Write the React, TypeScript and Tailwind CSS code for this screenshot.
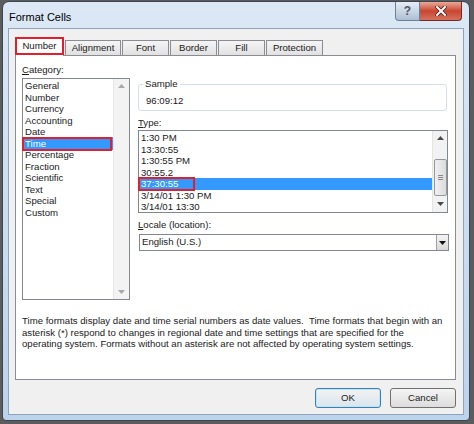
import React from 'react'

const categories = ['General', 'Number', 'Currency', 'Accounting', 'Date', 'Time', 'Percentage', 'Fraction', 'Scientific', 'Text', 'Special', 'Custom']
const types = ['1:30 PM', '13:30:55', '1:30:55 PM', '30:55.2', '37:30:55', '3/14/01 1:30 PM', '3/14/01 13:30']
const tabs = [
  { label: 'Alignment', w: 'w-[56px]' },
  { label: 'Font', w: 'w-[47px]' },
  { label: 'Border', w: 'w-[47px]' },
  { label: 'Fill', w: 'w-[47px]' },
  { label: 'Protection', w: 'w-[57px]' },
]

function Arrow({ dir, color = '#4a4a4a' }: { dir: 'up' | 'down'; color?: string }) {
  return (
    <svg width="7" height="4" viewBox="0 0 7 4">
      {dir === 'up' ? <path d="M0 4 L3.5 0 L7 4 Z" fill={color} /> : <path d="M0 0 L3.5 4 L7 0 Z" fill={color} />}
    </svg>
  )
}

export default function App() {
  return (
    <div className="w-[474px] h-[424px] bg-[#5b5c5e] overflow-hidden font-['Liberation_Sans',Arial,sans-serif] text-[9.6px] text-[#1a1a1a]">
      <div className="ml-[2px] mt-[1px] w-[468px] h-[420px] rounded-t-[7px] rounded-b-[4px] border border-[#3e4650] bg-gradient-to-b from-[#dce8f5] to-[#bcd3ec] flex flex-col px-[5px] pb-[5px]">
        {/* title bar */}
        <div className="h-[26px] flex items-start justify-between">
          <div className="pl-[1px] pt-[9px] text-[11px] leading-[13px] text-black">Format Cells</div>
          <div className="flex mr-[2px]">
            <div className="w-[25px] h-[19px] rounded-bl-[4px] border border-t-0 border-[#6f8094] bg-gradient-to-b from-[#e6eef6] to-[#aebfd3] flex items-center justify-center text-[12px] font-bold text-[#4d5663] leading-none">?</div>
            <div className="w-[42px] h-[19px] rounded-br-[4px] border border-t-0 border-l-0 border-[#6d2f2a] bg-gradient-to-b from-[#e9a898] via-[#c8452f] to-[#d4705d] flex items-center justify-center">
              <svg width="12" height="10" viewBox="0 0 12 10">
                <path d="M2 1 L10 9 M10 1 L2 9" stroke="#5b1f18" strokeWidth="3.6" strokeLinecap="square" />
                <path d="M2 1 L10 9 M10 1 L2 9" stroke="#ffffff" strokeWidth="2" strokeLinecap="square" />
              </svg>
            </div>
          </div>
        </div>

        {/* client area */}
        <div className="flex-1 bg-[#f0f0f0] border border-[#8fa5be] flex flex-col pl-[6px] pr-[7px] pt-[8px]">
          {/* tabs */}
          <div className="flex items-end h-[18px] relative z-10">
            <div className="relative w-[49px] h-[19px] -mb-px bg-white border border-b-0 border-[#898c95] flex items-center justify-center pb-[1px]">
              Number
              <div className="absolute left-[-1px] right-[-1px] top-[-1px] bottom-[1px] border-2 border-[#e2202b]" />
            </div>
            {tabs.map(t => (
              <div key={t.label} className={`${t.w} h-[15px] ml-[1px] bg-gradient-to-b from-[#f5f5f5] to-[#e1e1e1] border border-b-0 border-[#898c95] flex items-center justify-center`}>
                {t.label}
              </div>
            ))}
          </div>

          {/* panel */}
          <div className="h-[325px] bg-white border border-[#898c95] flex flex-col pl-[6px] pr-[6px]">
            <div className="flex gap-[8px]">
              {/* left column */}
              <div className="w-[108px] pt-[8px]">
                <div className="h-[12px] leading-[12px]"><span className="underline">C</span>ategory:</div>
                <div className="mt-[2px] h-[222px] border border-[#828790] flex">
                  <div className="flex-1 pt-[1px]">
                    {categories.map(c => (
                      <div key={c} className={`relative h-[11.5px] leading-[11.5px] pl-[2px] ${c === 'Time' ? 'bg-[#3399ff] text-white h-[13px] leading-[13px] -my-[0.75px]' : ''}`}>
                        {c}
                        {c === 'Time' && <div className="absolute left-[-1px] right-[1px] top-0 bottom-[-1px] border-2 border-[#e2202b]" />}
                      </div>
                    ))}
                  </div>
                  <div className="w-[16px] bg-[#f3f3f3] border-l border-[#e6e6e6] flex flex-col items-center justify-between py-[5px]">
                    <Arrow dir="up" color="#a8a8a8" />
                    <Arrow dir="down" color="#a8a8a8" />
                  </div>
                </div>
              </div>

              {/* right column */}
              <div className="w-[310px] pt-[22px]">
                <fieldset className="w-[309px] h-[33px] border border-[#d5dfe5] rounded-[3px] pl-[7px]">
                  <legend className="ml-[-3px] px-[2px] leading-[12px]">Sample</legend>
                  <div className="pt-[5px] leading-[12px]">96:09:12</div>
                </fieldset>
                <div className="mt-[6px] h-[12px] leading-[12px]"><span className="underline">T</span>ype:</div>
                <div className="mt-[1px] h-[83px] border border-[#828790] flex">
                  <div className="flex-1 pt-[1px] pl-[1px]">
                    {types.map(t => (
                      <div key={t} className={`relative h-[11.5px] leading-[11.5px] pl-[1px] ${t === '37:30:55' ? 'bg-[#3399ff] text-white' : ''}`}>
                        {t}
                        {t === '37:30:55' && <div className="absolute left-[-2px] w-[57px] top-[-1px] bottom-[-1px] border-2 border-[#e2202b]" />}
                      </div>
                    ))}
                  </div>
                  <div className="w-[15px] bg-[#f2f2f2] border-l border-[#e4e4e4] flex flex-col items-center">
                    <div className="h-[14px] flex items-center"><Arrow dir="up" /></div>
                    <div className="mt-[14px] w-[13px] h-[37px] rounded-[2px] border border-[#979797] bg-gradient-to-r from-[#f0f0f0] to-[#dcdcdc] flex flex-col items-center justify-center gap-[1px]">
                      <div className="w-[5px] h-px bg-[#888]" />
                      <div className="w-[5px] h-px bg-[#888]" />
                      <div className="w-[5px] h-px bg-[#888]" />
                    </div>
                    <div className="flex-1 flex items-center"><Arrow dir="down" /></div>
                  </div>
                </div>
                <div className="mt-[6px] h-[12px] leading-[12px]"><span className="underline">L</span>ocale (location):</div>
                <div className="mt-[3px] ml-[1px] w-[310px] h-[17px] border border-[#828790] flex items-center pl-[2px]">
                  <div className="flex-1">English (U.S.)</div>
                  <div className="w-[12px] h-[15px] border-l border-[#a0a0a0] bg-gradient-to-b from-[#f4f4f4] to-[#d9d9d9] flex items-center justify-center">
                    <Arrow dir="down" color="#111" />
                  </div>
                </div>
              </div>
            </div>

            <div className="mt-[15px] leading-[11.5px] whitespace-nowrap">
              Time formats display date and time serial numbers as date values.&nbsp; Time formats that begin with an<br />
              asterisk (*) respond to changes in regional date and time settings that are specified for the<br />
              operating system. Formats without an asterisk are not affected by operating system settings.
            </div>
          </div>

          {/* buttons */}
          <div className="mt-[8px] flex justify-end gap-[9px]">
            <div className="w-[66px] h-[20px] rounded-[3px] border border-[#3c7fb1] bg-gradient-to-b from-[#f2f2f2] to-[#d9e6ef] shadow-[inset_0_0_0_1px_#bfe4f7] flex items-center justify-center">OK</div>
            <div className="w-[66px] h-[20px] rounded-[3px] border border-[#707070] bg-gradient-to-b from-[#f4f4f4] to-[#dddddd] flex items-center justify-center">Cancel</div>
          </div>
        </div>
      </div>
    </div>
  )
}
